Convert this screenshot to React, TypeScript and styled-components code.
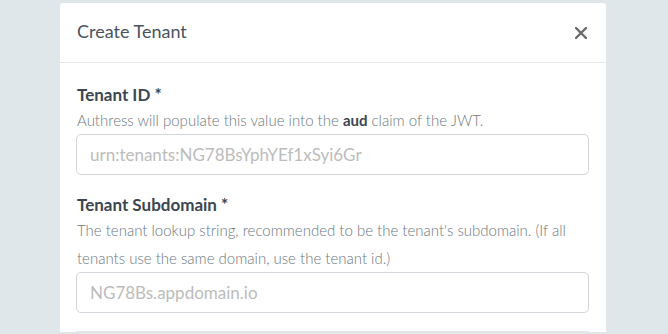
import React from "react";
import styled, { createGlobalStyle } from "styled-components";

const Global = createGlobalStyle`
  html, body { margin: 0; padding: 0; }
  body {
    background: #dfe7ea;
    font-family: Lato, "Noto Sans", sans-serif;
    height: 334px;
    overflow: hidden;
  }
`;

const Page = styled.div`
  padding: 3px 0 0 60px;
`;

const Modal = styled.div`
  width: 546px;
  background: #ffffff;
  border-radius: 3px 3px 0 0;
`;

const Header = styled.div`
  height: 60px;
  box-sizing: border-box;
  padding: 0 19px 0 17px;
  display: flex;
  align-items: center;
  justify-content: space-between;
  border-bottom: 1px solid #e4e6e8;
`;

const Title = styled.h2`
  margin: -3px 0 0;
  font-size: 18px;
  font-weight: 400;
  color: #48535e;
`;

const Close = styled.button`
  border: 0;
  background: none;
  padding: 0;
  width: 12px;
  height: 12px;
  display: flex;
  align-items: center;
  justify-content: center;
  cursor: pointer;
`;

const Body = styled.div`
  padding: 20px 17px 0 16px;
`;

const Field = styled.div`
  display: flex;
  flex-direction: column;
  margin-bottom: 18px;
`;

const Label = styled.label`
  font-size: 17px;
  font-weight: 700;
  color: #3b4651;
  line-height: 23px;
  padding-left: 1px;
`;

const Help = styled.p`
  margin: 0;
  padding-left: 1px;
  font-size: 15px;
  font-weight: 300;
  line-height: 28px;
  color: #6c7781;

  b {
    color: #3b4651;
    font-weight: 700;
  }
`;

const Input = styled.input`
  box-sizing: border-box;
  width: 513px;
  height: 41px;
  border: 1px solid #d1d5d9;
  border-radius: 5px;
  padding: 0 13px;
  font-family: Lato, "Noto Sans", sans-serif;
  font-size: 17px;
  color: #3b4651;
  outline: none;

  &::placeholder {
    color: #bcbcbc;
  }
`;

const Divider = styled.hr`
  margin: 0;
  width: 513px;
  border: 0;
  border-top: 1px solid #e4e6e8;
`;

export default function App() {
  return (
    <>
      <Global />
      <Page>
        <Modal>
          <Header>
            <Title>Create Tenant</Title>
            <Close aria-label="Close">
              <svg width="12" height="12" viewBox="0 0 12 12">
                <path d="M1 1L11 11M11 1L1 11" stroke="#6a6a6a" strokeWidth="2.4" strokeLinecap="round" />
              </svg>
            </Close>
          </Header>
          <Body>
            <Field>
              <Label>Tenant ID *</Label>
              <Help>
                Authress will populate this value into the <b>aud</b> claim of the JWT.
              </Help>
              <Input placeholder="urn:tenants:NG78BsYphYEf1xSyi6Gr" />
            </Field>
            <Field>
              <Label>Tenant Subdomain *</Label>
              <Help>
                The tenant lookup string, recommended to be the tenant's subdomain. (If all tenants use the same domain, use the tenant id.)
              </Help>
              <Input placeholder="NG78Bs.appdomain.io" />
            </Field>
            <Divider />
          </Body>
        </Modal>
      </Page>
    </>
  );
}
